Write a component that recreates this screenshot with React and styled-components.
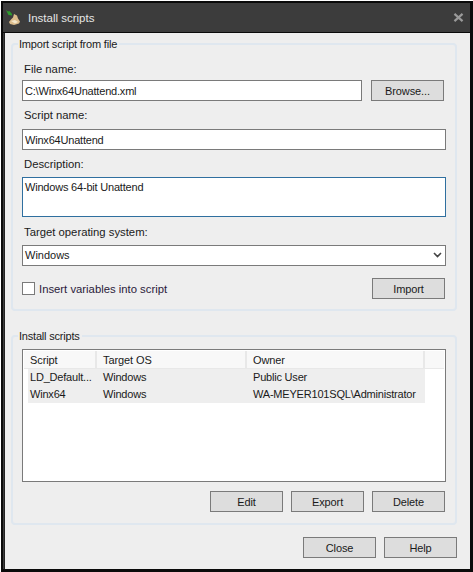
import React from "react";
import styled, { createGlobalStyle } from "styled-components";

const Global = createGlobalStyle`
  html, body { margin: 0; padding: 0; background: #fff; }
  body { font-family: "Liberation Sans", Arial, sans-serif; font-size: 11px; color: #1a1a1a; }
`;

const columns = [
  { title: "Script", width: 73 },
  { title: "Target OS", width: 150 },
  { title: "Owner", width: 178 },
];

const scripts = [
  { name: "LD_Default...", os: "Windows", owner: "Public User" },
  { name: "Winx64", os: "Windows", owner: "WA-MEYER101SQL\\Administrator" },
];

export default function App() {
  return (
    <>
      <Global />
      <Window>
        <TitleBar>
          <TitleIcon viewBox="0 0 15 15">
            <path d="M1 0l2 1.5L4.5 1 7 4v1.500L3.500 5 2.500 3z" fill="#2e9e2e" />
            <path d="M9 4l3 1.500 1 3 2 3-1 2-5 1.500-4-1-1-2 2-2.500 2-2z" fill="#dcbc8c" />
            <path d="M6 11l4-1 3 2-3 1.500z" fill="#f3e6cb" />
          </TitleIcon>
          <Title>Install scripts</Title>
          <CloseIcon viewBox="0 0 12 10">
            <path d="M1.500 1l9 8M10.500 1l-9 8" stroke="#9a9a9a" strokeWidth="2.4" fill="none" />
          </CloseIcon>
        </TitleBar>
        <Content>
          <ImportGroup>
            <Legend>Import script from file</Legend>
            <FieldLabel $top={11} $bottom={4}>File name:</FieldLabel>
            <FileRow>
              <TextInput readOnly value="C:\Winx64Unattend.xml" />
              <Button type="button">Browse...</Button>
            </FileRow>
            <FieldLabel $top={7} $bottom={7}>Script name:</FieldLabel>
            <TextInput readOnly value="Winx64Unattend" />
            <FieldLabel $top={7}>Description:</FieldLabel>
            <DescriptionBox>Windows 64-bit Unattend</DescriptionBox>
            <FieldLabel $top={8}>Target operating system:</FieldLabel>
            <SelectBox>
              <span>Windows</span>
              <Chevron viewBox="0 0 9 6">
                <path d="M1 1l3.500 3.500L8 1" stroke="#444" strokeWidth="1.6" fill="none" />
              </Chevron>
            </SelectBox>
            <ImportRow>
              <CheckLabel>
                <CheckBox />
                <CheckText>Insert variables into script</CheckText>
              </CheckLabel>
              <Button type="button">Import</Button>
            </ImportRow>
          </ImportGroup>

          <ScriptsGroup>
            <Legend>Install scripts</Legend>
            <ListBox>
              <HeaderRow>
                {columns.map((col) => (
                  <HeaderCell key={col.title} $width={col.width}>{col.title}</HeaderCell>
                ))}
              </HeaderRow>
              {scripts.map((script) => (
                <Row key={script.name}>
                  <Cell $width={columns[0].width}>{script.name}</Cell>
                  <Cell $width={columns[1].width}>{script.os}</Cell>
                  <Cell $width={columns[2].width - 4}>{script.owner}</Cell>
                </Row>
              ))}
            </ListBox>
            <ListActions>
              <Button type="button">Edit</Button>
              <Button type="button">Export</Button>
              <Button type="button">Delete</Button>
            </ListActions>
          </ScriptsGroup>

          <Footer>
            <Button type="button">Close</Button>
            <Button type="button">Help</Button>
          </Footer>
        </Content>
      </Window>
    </>
  );
}

const Window = styled.div`
  box-sizing: border-box;
  width: 472px;
  height: 571px;
  margin: 1px 0 0 1px;
  background: #3c3c3c;
  border: 2px solid #0a0a0a;
  border-right-width: 3px;
  border-bottom-width: 3px;
  display: flex;
  flex-direction: column;
`;

const TitleBar = styled.div`
  height: 29px;
  flex: none;
  display: flex;
  align-items: center;
  padding: 0 6px 0 2px;
  border-bottom: 1px solid #0a0a0a;
  box-sizing: content-box;
`;

const TitleIcon = styled.svg`
  width: 15px;
  height: 15px;
  margin-right: 8px;
`;

const Title = styled.div`
  flex: 1;
  color: #e6e6e6;
  font-size: 11.5px;
`;

const CloseIcon = styled.svg`
  width: 11px;
  height: 9px;
`;

const Content = styled.div`
  flex: 1;
  margin-left: 1px;
  background: #eeeeee;
  padding: 4px 13px 0 6px;
  border-left: 1px solid #222;
  display: flex;
  flex-direction: column;
`;

const Group = styled.fieldset`
  margin: 0;
  min-width: 0;
  box-sizing: border-box;
  border: 2px solid #dfe7ef;
  border-radius: 4px;
  padding: 0 10px 0 9px;
  display: block;
`;

const ImportGroup = styled(Group)`
  height: 274px;
`;

const ScriptsGroup = styled(Group)`
  height: 196px;
  margin-top: 18px;
`;

const Legend = styled.legend`
  padding: 0 2px 0 1px;
  margin-left: -4px;
  line-height: 14px;
  letter-spacing: -0.2px;
  color: #1a1a1a;
`;

const FieldLabel = styled.div`
  line-height: 14px;
  padding-left: 2px;
  font-size: 11.3px;
  margin-top: ${(p) => p.$top || 8}px;
  margin-bottom: ${(p) => p.$bottom || 6}px;
`;

const FileRow = styled.div`
  display: flex;
  gap: 9px;
  align-items: flex-start;
  & > input { width: 340px; flex: none; }
`;

const TextInput = styled.input`
  display: block;
  box-sizing: border-box;
  width: 424px;
  height: 21px;
  padding: 0 2px;
  margin: 0;
  border: 1px solid #7a7a7a;
  background: #fff;
  font: inherit;
  letter-spacing: -0.2px;
  color: #1a1a1a;
  outline: none;
`;

const DescriptionBox = styled.div`
  box-sizing: border-box;
  width: 424px;
  height: 40px;
  padding: 2px 2px;
  border: 1px solid #2f6f9f;
  background: #fff;
  line-height: 14px;
  letter-spacing: -0.2px;
`;

const SelectBox = styled.div`
  box-sizing: border-box;
  width: 424px;
  height: 21px;
  padding: 0 3px 1px 2px;
  border: 1px solid #7a7a7a;
  background: #fff;
  display: flex;
  align-items: center;
  justify-content: space-between;
`;

const Chevron = styled.svg`
  width: 9px;
  height: 6px;
`;

const ImportRow = styled.div`
  display: flex;
  justify-content: space-between;
  align-items: center;
  margin-top: 12px;
  width: 423px;
`;

const CheckLabel = styled.div`
  display: flex;
  align-items: center;
  gap: 4px;
`;

const CheckBox = styled.span`
  box-sizing: border-box;
  width: 13px;
  height: 13px;
  border: 1px solid #7a7a7a;
  background: #fff;
`;

const CheckText = styled.span`
  font-size: 11.3px;
  color: #2a1a3a;
`;

const Button = styled.button`
  box-sizing: border-box;
  width: 73px;
  height: 21px;
  flex: none;
  padding: 0;
  margin: 0;
  border: 1px solid #7a7a7a;
  background: #dddddd;
  font: inherit;
  letter-spacing: -0.1px;
  color: #1a1a1a;
`;

const ListBox = styled.div`
  box-sizing: border-box;
  width: 424px;
  height: 133px;
  margin-top: 6px;
  padding: 1px;
  border: 1px solid #7a7a7a;
  background: #fff;
`;

const HeaderRow = styled.div`
  display: flex;
  height: 17px;
  background: #f8f8f8;
  border-bottom: 1px solid #e8e8e8;
  box-sizing: content-box;
`;

const HeaderCell = styled.div`
  box-sizing: border-box;
  width: ${(p) => p.$width}px;
  padding-left: 6px;
  line-height: 18px;
  letter-spacing: -0.1px;
  border-right: 2px solid #e8e8e8;
`;

const Row = styled.div`
  display: flex;
  width: 397px;
  margin-left: 4px;
  height: 17px;
  background: #eeeeee;
`;

const Cell = styled.div`
  box-sizing: border-box;
  width: ${(p) => p.$width}px;
  padding-left: 2px;
  line-height: 17px;
  letter-spacing: -0.2px;
  white-space: nowrap;
`;

const ListActions = styled.div`
  display: flex;
  justify-content: flex-end;
  gap: 8px;
  margin-top: 9px;
  width: 423px;
`;

const Footer = styled.div`
  display: flex;
  justify-content: flex-end;
  gap: 8px;
  margin-top: 12px;
`;
